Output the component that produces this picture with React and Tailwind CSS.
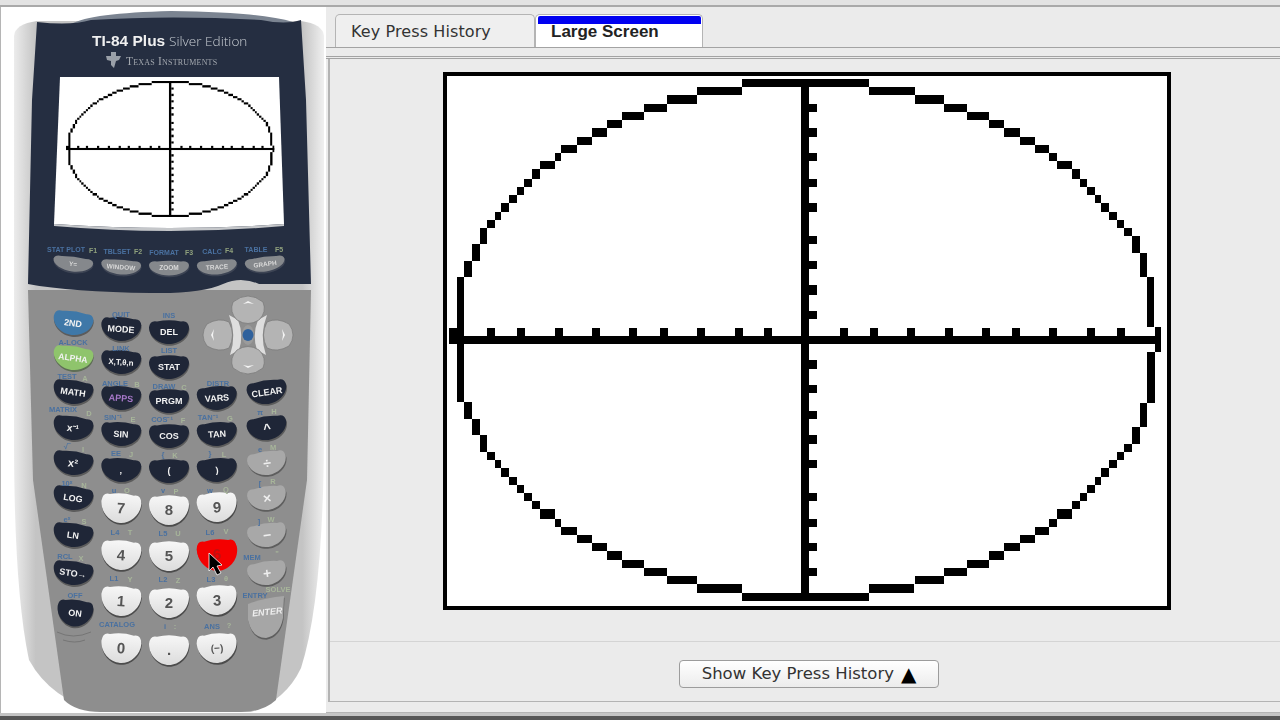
import React from 'react';

// black blocks of the graph, as [x1, x2, y1, y2] in page pixels
const CURVE = [
  [742, 869, 79, 87], [697, 742, 87, 95], [667, 697, 95, 104], [644, 667, 104, 112], [622, 644, 112, 120],
  [607, 622, 120, 128], [592, 607, 128, 137], [577, 592, 137, 145], [561, 577, 145, 153], [555, 561, 153, 161],
  [540, 555, 161, 169], [532, 540, 169, 179], [524, 532, 179, 187], [517, 524, 187, 195], [509, 517, 195, 203],
  [501, 509, 203, 212], [495, 501, 212, 220], [487, 495, 220, 228], [480, 487, 228, 244], [472, 480, 244, 261],
  [464, 472, 261, 277], [457, 464, 277, 402], [464, 472, 402, 419], [472, 480, 419, 435], [480, 487, 435, 452],
  [487, 495, 452, 460], [495, 501, 460, 468], [501, 509, 468, 477], [509, 517, 477, 485], [517, 524, 485, 493],
  [524, 532, 493, 501], [532, 540, 501, 509], [540, 555, 509, 519], [555, 561, 519, 527], [561, 577, 527, 535],
  [577, 592, 535, 543], [592, 607, 543, 551], [607, 622, 551, 560], [622, 644, 560, 568], [644, 667, 568, 576],
  [667, 697, 576, 584], [697, 742, 584, 593], [742, 869, 593, 601],
  [869, 915, 87, 95], [915, 944, 95, 104], [944, 967, 104, 112], [967, 989, 112, 120], [989, 1004, 120, 128],
  [1004, 1020, 128, 137], [1020, 1035, 137, 145], [1035, 1049, 145, 153], [1049, 1057, 153, 161],
  [1057, 1072, 161, 169], [1072, 1080, 169, 179], [1080, 1087, 179, 187], [1087, 1095, 187, 195],
  [1095, 1101, 195, 203], [1101, 1109, 203, 212], [1109, 1117, 212, 220], [1117, 1124, 220, 228],
  [1124, 1132, 228, 236], [1132, 1140, 236, 253], [1140, 1147, 253, 277], [1147, 1154, 277, 327],
  [869, 914, 584, 593], [915, 944, 576, 584], [944, 967, 568, 576], [967, 989, 560, 568], [989, 1004, 551, 560],
  [1004, 1020, 543, 551], [1020, 1035, 535, 543], [1035, 1049, 527, 535], [1049, 1057, 519, 527],
  [1057, 1072, 509, 519], [1072, 1080, 501, 509], [1080, 1087, 493, 501], [1087, 1095, 485, 493],
  [1095, 1101, 477, 485], [1101, 1109, 468, 477], [1109, 1117, 460, 468], [1117, 1124, 452, 460],
  [1124, 1132, 444, 452], [1132, 1140, 427, 444], [1140, 1147, 403, 427], [1147, 1155, 352, 403],
];

const AXES = [
  [449, 1161, 336, 344], [449, 461, 328, 344], [1155, 1161, 327, 352], [801, 809, 79, 601],
];

const X_TICKS = [487, 517, 555, 592, 629, 660, 697, 735, 764, 840, 870, 907, 945, 982, 1012, 1049, 1087, 1117];
const Y_TICKS = [
  [104, 112], [128, 137], [153, 161], [179, 187], [203, 212], [236, 244], [261, 269], [285, 295], [311, 319],
  [360, 369], [385, 393], [411, 419], [435, 444], [460, 468], [493, 501], [519, 527], [543, 551], [568, 576],
];

function Plot({ crisp }) {
  return (
    <g fill="#000" shapeRendering={crisp ? 'crispEdges' : 'auto'}>
      {CURVE.concat(AXES).map(([x1, x2, y1, y2], i) => (
        <rect key={i} x={x1} y={y1} width={x2 - x1} height={y2 - y1} />
      ))}
      {X_TICKS.map((x) => (
        <rect key={x} x={x} y={328} width={7.5} height={8} />
      ))}
      {Y_TICKS.map(([y1, y2]) => (
        <rect key={y1} x={809} y={y1} width={8} height={y2 - y1} />
      ))}
    </g>
  );
}

function keyPath(w, h) {
  return [
    `M ${-w / 2} ${-h * 0.2}`,
    `Q ${-w / 2 + 1} ${-h / 2} ${-w * 0.3} ${-h * 0.44}`,
    `Q 0 ${-h * 0.54} ${w * 0.3} ${-h * 0.44}`,
    `Q ${w / 2 - 1} ${-h / 2} ${w / 2} ${-h * 0.2}`,
    `C ${w / 2} ${h * 0.2} ${w * 0.25} ${h / 2} 0 ${h / 2}`,
    `C ${-w * 0.25} ${h / 2} ${-w / 2} ${h * 0.2} ${-w / 2} ${-h * 0.2} Z`,
  ].join(' ');
}

const DARK = { fill: '#1f2637', shadow: '#5c5c5c', text: '#f2f2f2', w: 40, h: 24, size: 9 };
const NUM = { fill: 'url(#numKey)', shadow: '#4c4c4c', text: '#555', w: 40, h: 30, size: 15 };
const GRAY = { fill: '#a8a8a8', shadow: '#5e5e5e', text: '#eee', w: 39, h: 24, size: 14 };
const FKEY = { fill: '#85888c', shadow: '#3d4454', text: '#d8d8d8', w: 40, h: 15, size: 6.5 };

const KEYS = [
  ['Y=', 72, 264, 7, FKEY], ['WINDOW', 120, 267, 4, FKEY], ['ZOOM', 168, 268, 0, FKEY], ['TRACE', 216, 267, -4, FKEY], ['GRAPH', 264, 264, -7, FKEY],
  ['2ND', 72, 323, 8, { ...DARK, fill: '#3f78a8' }], ['MODE', 120, 329, 4, DARK], ['DEL', 168, 332, 0, DARK],
  ['ALPHA', 72, 358, 8, { ...DARK, fill: '#8fc46c', shadow: '#5e6e55', size: 8.5 }], ['X,T,θ,n', 120, 362, 4, { ...DARK, size: 8 }], ['STAT', 168, 367, 0, DARK],
  ['MATH', 72, 392, 8, DARK], ['APPS', 120, 398, 4, { ...DARK, text: '#a678c8' }], ['PRGM', 168, 401, 0, DARK], ['VARS', 216, 398, -4, DARK], ['CLEAR', 266, 392, -8, DARK],
  ['x⁻¹', 72, 428, 8, { ...DARK, size: 10 }], ['SIN', 120, 434, 4, DARK], ['COS', 168, 436, 0, DARK], ['TAN', 216, 434, -4, DARK], ['^', 266, 428, -8, { ...DARK, size: 13 }],
  ['x²', 72, 463, 8, { ...DARK, size: 11 }], [',', 120, 470, 4, DARK], ['(', 168, 471, 0, DARK], [')', 216, 470, -4, DARK], ['÷', 266, 463, -8, GRAY],
  ['LOG', 72, 498, 8, DARK], ['7', 120, 508, 4, NUM], ['8', 168, 510, 0, NUM], ['9', 216, 507, -4, NUM], ['×', 266, 498, -8, GRAY],
  ['LN', 72, 535, 8, DARK], ['4', 120, 555, 4, NUM], ['5', 168, 556, 0, NUM], ['6', 216, 554, -4, { ...NUM, fill: '#f40000', shadow: '#f40000', text: '#c01010' }], ['−', 266, 535, -8, GRAY],
  ['STO→', 72, 573, 8, DARK], ['1', 120, 601, 4, NUM], ['2', 168, 603, 0, NUM], ['3', 216, 600, -4, NUM], ['+', 266, 573, -8, GRAY],
  ['ON', 74, 613, 6, { ...DARK, w: 36, h: 27 }], ['0', 120, 648, 4, NUM], ['.', 168, 650, 0, NUM], ['(−)', 216, 648, -4, { ...NUM, size: 10 }],
];

const BLUE = '#4a71a0';
const PALE = '#a7b59a';

const LABELS = [
  ['STAT PLOT', 65, 252, BLUE, 7], ['F1', 92, 253, '#8fa07c', 7], ['TBLSET', 116, 254, BLUE, 7], ['F2', 137, 254, '#8fa07c', 7],
  ['FORMAT', 163, 255, BLUE, 7], ['F3', 188, 255, '#8fa07c', 7], ['CALC', 211, 254, BLUE, 7], ['F4', 228, 253, '#8fa07c', 7],
  ['TABLE', 255, 252, BLUE, 7], ['F5', 278, 252, '#8fa07c', 7],
  ['QUIT', 120, 317, BLUE], ['INS', 168, 318, BLUE],
  ['A-LOCK', 72, 345, BLUE], ['LINK', 120, 351, BLUE], ['LIST', 168, 353, BLUE],
  ['TEST', 66, 379, BLUE], ['A', 84, 381, PALE], ['ANGLE', 114, 386, BLUE], ['B', 136, 387, PALE], ['DRAW', 163, 389, BLUE], ['C', 183, 390, PALE], ['DISTR', 217, 386, BLUE],
  ['MATRIX', 62, 412, BLUE], ['D', 88, 416, PALE], ['SIN⁻¹', 112, 420, BLUE], ['E', 132, 422, PALE], ['COS⁻¹', 161, 422, BLUE], ['F', 182, 423, PALE], ['TAN⁻¹', 207, 420, BLUE], ['G', 229, 421, PALE], ['π', 259, 415, BLUE], ['H', 273, 414, PALE],
  ['√‾', 66, 449, BLUE], ['I', 82, 452, PALE], ['EE', 115, 456, BLUE], ['J', 130, 457, PALE], ['{', 162, 457, BLUE], ['K', 174, 458, PALE], ['}', 209, 456, BLUE], ['L', 223, 457, PALE], ['e', 259, 452, BLUE], ['M', 272, 450, PALE],
  ['10ˣ', 66, 486, BLUE], ['N', 83, 488, PALE], ['u', 113, 493, BLUE], ['O', 126, 493, PALE], ['v', 162, 493, BLUE], ['P', 175, 494, PALE], ['w', 209, 493, BLUE], ['Q', 225, 492, PALE], ['[', 259, 486, BLUE], ['R', 272, 484, PALE],
  ['eˣ', 66, 522, BLUE], ['S', 83, 524, PALE], ['L4', 114, 535, BLUE], ['T', 129, 535, PALE], ['L5', 162, 536, BLUE], ['U', 177, 536, PALE], ['L6', 209, 535, BLUE], ['V', 225, 534, PALE], [']', 258, 524, BLUE], ['W', 270, 522, PALE],
  ['RCL', 64, 559, BLUE], ['X', 80, 561, PALE], ['L1', 113, 581, BLUE], ['Y', 129, 582, PALE], ['L2', 162, 582, BLUE], ['Z', 177, 583, PALE], ['L3', 210, 582, BLUE], ['θ', 225, 581, PALE], ['MEM', 251, 560, BLUE], ['"', 276, 556, PALE],
  ['OFF', 74, 598, BLUE], ['CATALOG', 116, 627, BLUE], ['i', 164, 629, BLUE], [':', 174, 629, PALE], ['ANS', 211, 629, BLUE], ['?', 228, 628, PALE], ['ENTRY', 254, 598, BLUE], ['SOLVE', 277, 592, PALE],
];

function CalcKey({ label, x, y, rot, k }) {
  const d = keyPath(k.w, k.h);
  return (
    <g transform={`translate(${x} ${y}) rotate(${rot})`}>
      <path d={d} fill={k.shadow} transform="translate(0.5 1.8)" />
      <path d={d} fill={k.fill} />
      <text y={k.size * 0.36} textAnchor="middle" fontSize={k.size} fontWeight="700" fill={k.text}>
        {label}
      </text>
    </g>
  );
}

function Dpad() {
  return (
    <g>
      <path d="M228 315 Q236 335 229 355 L238 350 Q243 335 237 320 Z" fill="#dedede" />
      <path d="M266 315 Q258 335 265 355 L256 350 Q251 335 257 320 Z" fill="#dedede" />
      <path d="M232 302 Q247 290 262 302 Q266 312 258 320 Q247 327 236 320 Q228 312 232 302 Z" fill="#b4b4b4" stroke="#777" strokeWidth="0.7" />
      <path d="M232 368 Q247 380 262 368 Q266 358 258 350 Q247 343 236 350 Q228 358 232 368 Z" fill="#b4b4b4" stroke="#777" strokeWidth="0.7" />
      <path d="M228 322 Q235 335 228 348 Q218 353 206 346 Q198 335 206 324 Q218 317 228 322 Z" fill="#b4b4b4" stroke="#777" strokeWidth="0.7" />
      <path d="M266 322 Q259 335 266 348 Q276 353 288 346 Q296 335 288 324 Q276 317 266 322 Z" fill="#b4b4b4" stroke="#777" strokeWidth="0.7" />
      <ellipse cx="247" cy="335" rx="6" ry="10" fill="#9b9b9b" />
      <ellipse cx="247" cy="335" rx="5.5" ry="6" fill="#2f619c" />
      <path d="M242 304 L247 301 L253 304 L247 303 Z M242 365 L247 368 L253 365 L247 366 Z" fill="#f4f4f4" />
      <path d="M210 335 L213 329 L212 335 L213 341 Z M284 335 L281 329 L282 335 L281 341 Z" fill="#f4f4f4" />
    </g>
  );
}

function Calculator() {
  return (
    <svg viewBox="2 8 324 705" className="w-[324px] h-[705px] block font-['Liberation_Sans',sans-serif]">
      <defs>
        <linearGradient id="shell" x1="0" x2="1" y1="0" y2="0">
          <stop offset="0" stopColor="#ececec" />
          <stop offset="0.07" stopColor="#c4c4c4" />
          <stop offset="0.93" stopColor="#c4c4c4" />
          <stop offset="1" stopColor="#f0f0f0" />
        </linearGradient>
        <linearGradient id="numKey" x1="0" x2="0" y1="0" y2="1">
          <stop offset="0" stopColor="#f7f7f7" />
          <stop offset="1" stopColor="#dcdcdc" />
        </linearGradient>
      </defs>

      <path d="M13 36 Q14 24 36 21 L300 21 Q322 24 323 36 L323 440 Q322 600 300 668 Q285 700 250 712 L100 712 Q50 700 28 660 Q13 590 13 440 Z" fill="url(#shell)" />
      <path d="M70 24 Q90 13 170 11 Q260 12 292 22 L300 30 L36 30 Z" fill="#7b8491" />
      <path d="M27 290 L310 290 L306 480 L275 700 Q262 712 240 712 L100 712 Q75 712 63 700 L32 480 Z" fill="#8e8e8e" />
      <path d="M36 22 Q70 26 90 20 Q170 15 260 20 Q285 25 300 20 L305 100 L310 284 L258 284 Q240 276 222 284 Q200 294 150 293 Q70 292 27 284 L31 100 Z" fill="#252e41" />

      <text x="91" y="46" fontSize="15.5" fontWeight="700" fill="#f0f0f0">TI-84 Plus</text>
      <text x="168" y="46" fontSize="13.6" fill="#c7ccd2" fontFamily="'Open Sans', sans-serif" fontWeight="300">Silver Edition</text>
      <path d="M105 56 L110 56 L110 52 L115 52 L115 56 L120 56 L118 60 L115 61 L113 68 L110 65 L110 61 L106 60 Z" fill="#9aa0a8" />
      <text x="125" y="65" fontFamily="'Liberation Serif', serif" fontSize="11.5" fontVariant="small-caps" fill="#a2a7ae" letterSpacing="0.2">Texas Instruments</text>

      <path d="M59 77 L278 77 L283 224 Q170 232 53 224 Z" fill="#fff" />
      <path d="M53 224 Q170 232 283 224 L283 226 Q170 236 53 226 Z" fill="#c5c7ca" />
      <g transform="translate(65 81) scale(0.2925 0.2605) translate(-449 -79)">
        <Plot />
      </g>

      {KEYS.map(([label, x, y, rot, k]) => (
        <CalcKey key={label} label={label} x={x} y={y} rot={rot} k={k} />
      ))}

      <g transform="translate(265 600)">
        <path d="M-18 4 Q-2 -2 18 -4 L17 18 Q14 35 0 38 Q-14 38 -18 20 Z" fill="#5e5e5e" transform="translate(0.5 1.8)" />
        <path d="M-18 4 Q-2 -2 18 -4 L17 18 Q14 35 0 38 Q-14 38 -18 20 Z" fill="#a6a6a6" />
        <text y="15" textAnchor="middle" fontSize="9" fontWeight="700" fontStyle="italic" fill="#eee" transform="rotate(-6)">ENTER</text>
      </g>

      <Dpad />

      {LABELS.map(([text, x, y, color, size]) => (
        <text key={text + x} x={x} y={y} textAnchor="middle" fontSize={size || 7.5} fontWeight="700" fill={color}>
          {text}
        </text>
      ))}

      <path d="M56 632 Q72 640 90 632 M62 640 Q74 644 84 640" fill="none" stroke="#757575" strokeWidth="1" />

      <path d="M208 553 L208 571 L212 567 L216 575 L220 573 L216 566 L221 565 Z" fill="#000" stroke="#fff" strokeWidth="0.8" />
    </svg>
  );
}

export default function App() {
  return (
    <div className="w-[1280px] h-[720px] overflow-hidden flex flex-col bg-[#e2e2e2] font-['DejaVu_Sans',sans-serif] text-[#333]">
      <div className="h-[7px] shrink-0 bg-[#e3e3e3] border-b-2 border-[#a9a9a9]" />

      <div className="flex flex-1 min-h-0">
        <div className="w-[326px] shrink-0 pl-[2px] pt-[1px] bg-white border-l border-[#b5b5b5] blur-[0.35px]">
          <Calculator />
        </div>

        <div className="flex-1 flex flex-col bg-[#ebebeb]">
          <div className="h-[41px] shrink-0 flex items-end pl-[9px] border-b border-[#a3a3a3]">
            <div className="w-[200px] h-[33px] pl-[15px] pt-[6px] text-[16px] leading-[21px] tracking-[0.1px] bg-[#efefef] border border-b-0 border-[#b4b4b4] rounded-t-[5px]">
              Key Press History
            </div>
            <div className="relative w-[168px] h-[33px] pl-[15px] pt-[6px] text-[17px] leading-[21px] font-bold font-['Liberation_Sans',sans-serif] text-[#222] bg-white border border-b-0 border-[#b4b4b4] rounded-t-[5px]">
              <div className="absolute left-[2px] right-[1px] top-[1px] h-[8px] bg-[#0000f0] rounded-t-[2px]" />
              Large Screen
            </div>
          </div>

          <div className="h-[11px] shrink-0 border-b-[3px] border-double border-[#a3a3a3]" />

          <div className="flex-1 flex flex-col ml-[2px] border-l-2 border-b border-[#b3b3b3]">
            <div className="h-[583px] shrink-0 pt-[13px] pl-[113px] border-b border-[#d4d4d4]">
              <div className="w-[728px] h-[538px] border-4 border-black bg-white">
                <svg viewBox="447 76 720 530" className="w-[720px] h-[530px] block">
                  <Plot crisp />
                </svg>
              </div>
            </div>
            <div className="flex-1 pt-[18px] pl-[349px]">
              <button className="w-[260px] h-[28px] flex items-center justify-center gap-[7px] text-[16.5px] rounded-[4px] border border-[#9c9c9c] bg-gradient-to-b from-white to-[#ececec]">
                Show Key Press History
                <span className="text-[20px] leading-none text-black">▲</span>
              </button>
            </div>
          </div>
          <div className="h-[11px] shrink-0 border-b border-[#b3b3b3]" />
        </div>
      </div>

      <div className="h-[7px] shrink-0 border-t-[3px] border-[#c4c4c4] bg-[#565656]" />
    </div>
  );
}
